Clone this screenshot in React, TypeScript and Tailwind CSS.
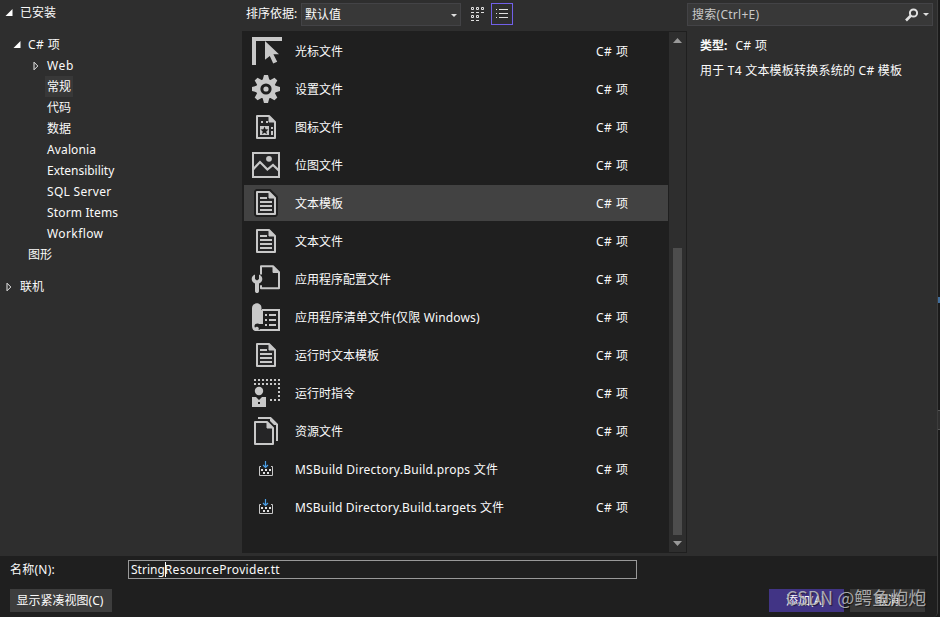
import React from 'react';

const INK = '#c8c8c8';
const HOLE = '#1f1f1f';

function DocShape({ fill = '#252526' }: { fill?: string }) {
  return (
    <>
      <path d="M7 5h12l6 6v16H7z" fill={fill} stroke={INK} strokeWidth="2" strokeLinejoin="round" />
      <path d="M19 5v6h6z" fill={INK} stroke={INK} strokeWidth="1" />
    </>
  );
}

function Icon({ children }: { children: React.ReactNode }) {
  return (
    <svg width="32" height="32" viewBox="0 0 32 32" className="shrink-0">
      {children}
    </svg>
  );
}

function CursorIcon() {
  return (
    <Icon>
      <path d="M2 2h30v4H6v24H2z" fill={INK} />
      <path d="M15 6l14 13.2h-5.6l3.8 7.6-4 1.8-3.4-7.6-4.8 3.8z" fill={INK} />
    </Icon>
  );
}

function GearIcon() {
  return (
    <Icon>
      <g fill={INK}>
        {[0, 45, 90, 135].map((angle) => (
          <path key={angle} d="M14 2h4l1.4 5v18L18 30h-4l-1.4-5V7z" transform={`rotate(${angle} 16 16)`} />
        ))}
        <circle cx="16" cy="16" r="10" />
      </g>
      <circle cx="16" cy="16" r="5.6" fill={HOLE} />
      <circle cx="16" cy="16" r="2.6" fill={INK} />
    </Icon>
  );
}

function IconFileIcon() {
  return (
    <Icon>
      <DocShape />
      <path d="M11 10h2v2h-2zM16 10h2v2h-2zM21 16h2v2h-2zM21 20h2v4h-2zM10 15h9v9h-9z" fill={INK} />
      <path d="M14.5 15.6l1.1 2.700 2.900.2-2.200 1.900.7 2.800-2.500-1.500-2.500 1.500.7-2.800-2.200-1.900 2.900-.2z" fill={HOLE} />
    </Icon>
  );
}

function PictureIcon() {
  return (
    <Icon>
      <path d="M3 4h26v24H3z" fill="#252526" stroke={INK} strokeWidth="2" />
      <circle cx="19" cy="9.8" r="2.9" fill={INK} />
      <path d="M3 20.5l7-7.5 7.4 7.6 5.6-4.6 6 5.6" fill="none" stroke={INK} strokeWidth="2.2" />
    </Icon>
  );
}

function TextIcon({ halo }: { halo?: boolean }) {
  return (
    <Icon>
      {halo && <path d="M6 2h14.5L28 9.5V28l-2 2H6l-2-2V4z" fill={HOLE} />}
      <DocShape />
      <path d="M10 10h7v2h-7zM10 14h12v2H10zM10 18h12v2H10zM10 22h12v2H10z" fill={INK} />
    </Icon>
  );
}

function ConfigIcon() {
  return (
    <Icon>
      <path d="M11 11.5V3.3h12l6 6v16H11v-3" fill="none" stroke={INK} strokeWidth="2" strokeLinejoin="round" />
      <path d="M23 3v6.5h6z" fill={INK} stroke={INK} />
      <path d="M5 11.5v4.500l2 1.500 2-1.500v-4.500c2 .8 3.300 2.500 3.300 4.500s-1.300 3.700-3.300 4.500v7.500c0 2.800-4 2.800-4 0v-7.500c-2-.8-3.300-2.500-3.300-4.500s1.300-3.700 3.300-4.500z" fill={INK} />
    </Icon>
  );
}

function ManifestIcon() {
  return (
    <Icon>
      <path d="M12 9h17v20H8" fill="none" stroke={INK} strokeWidth="2" />
      <path d="M2 7c0-6.200 9.500-6.200 9.500 0v2H13v14H9v7H6c-2.500 0-4-2-4-5z" fill={INK} />
      <path d="M5.500 23c2.500-1.500 5.500.3 5.500 3 0 1.600-1 2.800-2.500 3 .6-1.500.3-2.600-.8-3-1.200-.4-2 .1-2.700.8-.9-1.500-.6-3 .5-3.800z" fill={HOLE} />
      <path d="M15 13h2v2h-2zM19 13h7v2h-7zM15 18h2v2h-2zM19 18h7v2h-7zM15 23h2v2h-2zM19 23h7v2h-7z" fill={INK} />
    </Icon>
  );
}

const dots = [
  ...[4, 8, 12, 16, 20, 24, 28].flatMap((x) => [[x, 2], [x, 6]]),
  [28, 10], [28, 14], [28, 18], [28, 22], [24, 22], [20, 22],
];

function DirectiveIcon() {
  return (
    <Icon>
      {dots.map(([x, y]) => (
        <rect key={`${x}-${y}`} x={x} y={y} width="2" height="2" fill={INK} />
      ))}
      <circle cx="9" cy="14" r="4.2" fill={INK} />
      <path d="M2 20h4l3 3 3-3h4v10H2z" fill={INK} />
      <path d="M8 25h2v2H8z" fill={HOLE} />
    </Icon>
  );
}

function ResourceIcon() {
  return (
    <Icon>
      <path d="M8 3h12.5l6.5 6.5V26" fill="none" stroke={INK} strokeWidth="2" />
      <path d="M20 3v3l4 4h3z" fill={INK} />
      <path d="M5 7h12l6 6v16H5z" fill="#252526" stroke={INK} strokeWidth="2" strokeLinejoin="round" />
      <path d="M17 7v6h6z" fill={INK} stroke={INK} />
    </Icon>
  );
}

function BuildIcon() {
  return (
    <Icon>
      <path d="M11 13.5H9.5v9h13v-9H21" fill="none" stroke={INK} />
      <path d="M11 16h2v2h-2zM15 16h2v2h-2zM19 16h2v2h-2zM13 19h2v2h-2zM17 19h2v2h-2z" fill="#e0e0e0" />
      <path d="M15.5 8v6.5M13 12l2.5 2.5L18 12" fill="none" stroke="#4ba0e8" strokeWidth="1.2" />
    </Icon>
  );
}

const items = [
  { name: '光标文件', icon: <CursorIcon /> },
  { name: '设置文件', icon: <GearIcon /> },
  { name: '图标文件', icon: <IconFileIcon /> },
  { name: '位图文件', icon: <PictureIcon /> },
  { name: '文本模板', icon: <TextIcon halo />, selected: true },
  { name: '文本文件', icon: <TextIcon /> },
  { name: '应用程序配置文件', icon: <ConfigIcon /> },
  { name: '应用程序清单文件(仅限 Windows)', icon: <ManifestIcon />, tracking: 'tracking-[0.16px]' },
  { name: '运行时文本模板', icon: <TextIcon /> },
  { name: '运行时指令', icon: <DirectiveIcon /> },
  { name: '资源文件', icon: <ResourceIcon /> },
  { name: 'MSBuild Directory.Build.props 文件', icon: <BuildIcon />, tracking: 'tracking-[0.24px]' },
  { name: 'MSBuild Directory.Build.targets 文件', icon: <BuildIcon />, tracking: 'tracking-[0.18px]' },
];

const categories = [
  { name: 'Web', tracking: 'tracking-[0.6px]' },
  { name: '常规' },
  { name: '代码' },
  { name: '数据' },
  { name: 'Avalonia', tracking: 'tracking-[0.13px]' },
  { name: 'Extensibility', tracking: 'tracking-[-0.02px]' },
  { name: 'SQL Server', tracking: 'tracking-[0.3px]' },
  { name: 'Storm Items', tracking: 'tracking-[0.15px]' },
  { name: 'Workflow', tracking: 'tracking-[0.4px]' },
];

function Expanded() {
  return (
    <svg width="8" height="8" viewBox="0 0 8 8" className="shrink-0">
      <path d="M7.5 0v7H.5z" fill="#fff" />
    </svg>
  );
}

function Collapsed() {
  return (
    <svg width="6" height="10" viewBox="0 0 6 10" className="shrink-0">
      <path d="M1 1.2v7.6L4.8 5z" fill="none" stroke="#e8e8e8" />
    </svg>
  );
}

function Sidebar() {
  return (
    <div className="w-[242px] shrink-0 pt-[2px] leading-[21px]">
      <div className="flex h-[21px] items-center pl-[5px]">
        <Expanded />
        <span className="pl-[7px]">已安装</span>
      </div>
      <div className="mt-[11px] flex h-[21px] items-center pl-[13px]">
        <Expanded />
        <span className="pl-[7px] tracking-[0.4px]">C# 项</span>
      </div>
      {categories.map(({ name, tracking = '' }) => (
        <div key={name} className="flex h-[21px] items-center pl-[33px]">
          <div className="w-3">{name === 'Web' && <Collapsed />}</div>
          <span className={`px-[2px] ${tracking} ${name === '常规' ? 'bg-[#383838]' : ''}`}>{name}</span>
        </div>
      ))}
      <div className="h-[21px] pl-7">图形</div>
      <div className="mt-[11px] flex h-[21px] items-center pl-[6px]">
        <Collapsed />
        <span className="pl-2">联机</span>
      </div>
    </div>
  );
}

function ItemList() {
  return (
    <div className="flex h-[522px] w-[445px] bg-[#1f1f1f] p-px">
      <div className="flex w-[426px] flex-col gap-[2px] pl-px pt-px">
        {items.map(({ name, icon, selected, tracking = '' }) => (
          <div key={name} className={`flex h-9 w-[424px] items-center pl-[6px] ${selected ? 'bg-[#424242]' : ''}`}>
            {icon}
            <span className={`w-[302px] pl-[13px] pt-[2px] ${tracking}`}>{name}</span>
            <span className="pl-3 pt-[2px] tracking-[0.5px]">C# 项</span>
          </div>
        ))}
      </div>
      <div className="flex w-[17px] flex-col items-center bg-[#2e2e2e]">
        <svg width="9" height="5" viewBox="0 0 9 5" className="mt-[6px]">
          <path d="M0 5L4.5 0 9 5z" fill="#999" />
        </svg>
        <div className="mt-[205px] h-[287px] w-[9px] bg-[#4d4d4d]" />
        <svg width="9" height="5" viewBox="0 0 9 5" className="mt-[6px]">
          <path d="M0 0l4.5 5L9 0z" fill="#999" />
        </svg>
      </div>
    </div>
  );
}

function Toolbar() {
  return (
    <div className="flex h-[31px] items-start pl-1 pt-[3px]">
      <span className="w-[55px] whitespace-nowrap leading-[22px]">排序依据:</span>
      <div className="flex h-[23px] w-[160px] items-center justify-between border border-[#434346] bg-[#383838] pl-[3px] pr-[3px]">
        <span>默认值</span>
        <svg width="6" height="3" viewBox="0 0 6 3" className="mt-px">
          <path d="M0 0h6L3 3z" fill="#e0e0e0" />
        </svg>
      </div>
      <svg width="14" height="15" viewBox="0 0 14 15" className="ml-[10px] mt-1">
        {[0, 5, 10].map((x) => (
          <path key={x} d={`M${x + 0.5} .5h2v2h-2zM${x} 5.5h3`} fill="none" stroke="#e0e0e0" />
        ))}
        {[0, 5].map((x) => (
          <path key={x} d={`M${x + 0.5} 8.5h2v2h-2zM${x} 13.5h3`} fill="none" stroke="#e0e0e0" />
        ))}
      </svg>
      <div className="ml-[6px] flex h-[22px] w-[22px] items-center justify-center border border-[#7160e8]">
        <svg width="12" height="10" viewBox="0 0 12 10">
          <path d="M0 .5h1M3 .5h9M0 4.5h1M3 4.5h9M0 8.5h1M3 8.5h9" stroke="#e0e0e0" />
        </svg>
      </div>
    </div>
  );
}

function Details() {
  return (
    <div className="w-[250px] pt-[3px]">
      <div className="flex h-[23px] w-[246px] items-center border border-[#434346] bg-[#383838] pl-1 pr-[3px] text-[#c8c8c8]">
        <span className="flex-1 tracking-[0.27px]">搜索(Ctrl+E)</span>
        <svg width="14" height="14" viewBox="0 0 14 14">
          <circle cx="8.5" cy="5" r="3.6" fill="none" stroke="#e0e0e0" strokeWidth="2" />
          <path d="M6 7.5L1 12.5" stroke="#e0e0e0" strokeWidth="2.6" />
        </svg>
        <svg width="6" height="3" viewBox="0 0 6 3" className="ml-1">
          <path d="M0 0h6L3 3z" fill="#e0e0e0" />
        </svg>
      </div>
      <div className="pl-[13px] pt-[11px]">
        <div className="flex h-[18px] items-center gap-2">
          <b>类型:</b>
          <span className="tracking-[0.4px]">C# 项</span>
        </div>
        <div className="mt-[7px] leading-[18px] tracking-[0.23px]">用于 T4 文本模板转换系统的 C# 模板</div>
      </div>
    </div>
  );
}

function Footer() {
  return (
    <div className="h-[61px] bg-[#1f1f1f] pl-[10px] pt-1">
      <div className="flex h-[19px] items-center">
        <span className="w-[118px] tracking-[0.25px]">名称(N):</span>
        <div className="flex h-[19px] w-[509px] items-center border border-[#999] pl-[2px]">
          <span>String</span>
          <span className="-mr-px h-[15px] w-px bg-white" />
          <span className="tracking-[0.32px]">ResourceProvider.tt</span>
        </div>
      </div>
      <div className="mt-[10px] flex h-[23px] text-center leading-[23px]">
        <div className="w-[102px] bg-[#3d3d3d] pr-[2px]">显示紧凑视图(C)</div>
        <div className="ml-[657px] w-[75px] bg-[#413485] pr-[2px]">添加(A)</div>
        <div className="ml-[6px] w-[75px] bg-[#383838]">取消</div>
      </div>
    </div>
  );
}

export default function App() {
  return (
    <div className="relative flex h-[617px] w-[940px] overflow-hidden whitespace-nowrap bg-[#1a1a1a] font-['Noto_Sans','Noto_Sans_CJK_SC',sans-serif] text-[12px] leading-4 text-[#fafafa]">
      <div className="w-[938px] overflow-hidden rounded-br-[5px] border-r border-[#3d3d3d] bg-[#2e2e2e]">
        <div className="flex h-[556px]">
          <Sidebar />
          <div className="w-[445px] shrink-0">
            <Toolbar />
            <ItemList />
          </div>
          <Details />
        </div>
        <Footer />
      </div>
      <div className="flex flex-col pt-[297px]">
        <div className="h-[6px] w-[2px] bg-[#3f6d9c]" />
        <div className="mt-[107px] h-5 w-[2px] border-y border-[#555] bg-[#2e2e2e]" />
      </div>
      {/* watermark across the dialog buttons */}
      <div className="absolute left-[786px] top-[585px] font-['Noto_Sans_CJK_SC',sans-serif] text-[18px] leading-6 text-[#c0c0c0]/85 [text-shadow:1px_1px_1px_rgba(0,0,0,0.5)]">
        CSDN @鳄鱼炮炮
      </div>
    </div>
  );
}
